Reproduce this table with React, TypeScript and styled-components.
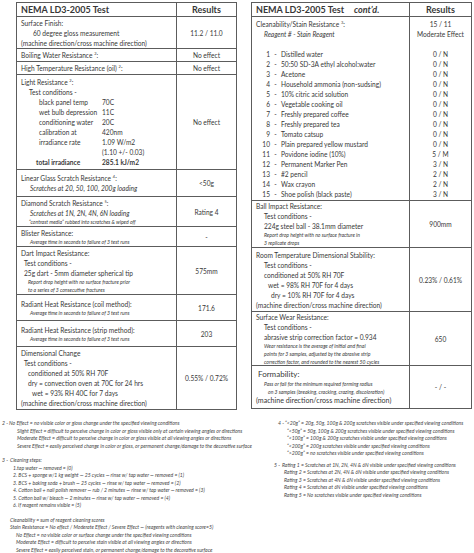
import React from 'react';
import styled, { createGlobalStyle, css } from 'styled-components';

const GlobalStyle = createGlobalStyle`
  html, body {
    margin: 0;
    padding: 0;
    background: #fff;
  }
  body {
    font-family: Lato, "Open Sans", sans-serif;
    color: #383838;
  }
`;

const rule = '#5c5c5c';

const Page = styled.div`
  width: 474px;
  height: 553px;
  overflow: hidden;
  box-sizing: border-box;
  padding-top: 2px;
`;

const Tables = styled.div`
  display: grid;
  grid-template-columns: 221px 221px;
  column-gap: 14px;
  align-items: start;
  padding-left: 16px;
`;

const Sheet = styled.div`
  border: 1px solid ${rule};
`;

const Row = styled.div<{ $h: number; $split: number }>`
  display: grid;
  grid-template-columns: ${(p) => p.$split}px 1fr;
  height: ${(p) => p.$h}px;
  box-sizing: border-box;
  & + & {
    border-top: 1px solid ${rule};
  }
`;

const Desc = styled.div`
  display: flex;
  flex-direction: column;
  justify-content: center;
  padding-left: 4px;
  overflow: hidden;
  white-space: nowrap;
`;

const Result = styled.div`
  border-left: 1px solid ${rule};
  display: flex;
  flex-direction: column;
  justify-content: center;
  align-items: center;
  font-size: 6.6px;
  line-height: 10px;
  white-space: nowrap;
`;

const HeadTitle = styled.div`
  padding-left: 4px;
  font-weight: 700;
  font-size: 9px;
  line-height: 13px;
  white-space: nowrap;
`;

const HeadResult = styled(Result)`
  font-weight: 700;
  font-size: 9px;
  line-height: 13px;
`;

const Contd = styled.span`
  font-style: italic;
  margin-left: 10px;
`;

type Tone = 'body' | 'em' | 'note' | 'big' | 'wide';

const tones = {
  body: css`
    font-size: 6.6px;
    line-height: 10px;
  `,
  em: css`
    font-size: 6.6px;
    line-height: 10px;
    font-style: italic;
  `,
  note: css`
    font-size: 5.1px;
    line-height: 8px;
    font-style: italic;
  `,
  big: css`
    font-size: 8px;
    line-height: 11px;
  `,
  wide: css`
    font-size: 7.1px;
    line-height: 10px;
  `,
};

const Line = styled.div<{ $indent?: number; $tone?: Tone }>`
  padding-left: ${(p) => p.$indent ?? 0}px;
  ${(p) => tones[p.$tone ?? 'body']}
`;

const Pair = styled.div<{ $indent: number; $labelW: number; $bold?: boolean }>`
  display: grid;
  grid-template-columns: ${(p) => p.$labelW}px auto;
  padding-left: ${(p) => p.$indent}px;
  font-size: 6.6px;
  line-height: 10px;
  font-weight: ${(p) => (p.$bold ? 700 : 400)};
`;

const Reagent = styled.div`
  display: grid;
  grid-template-columns: 14px 11px 1fr;
  font-size: 6.6px;
  line-height: 10px;
`;

const Num = styled.span`
  text-align: right;
`;

const Dash = styled.span`
  text-align: center;
`;

const Sup = styled.sup`
  font-size: 4px;
  line-height: 0;
  vertical-align: 3px;
`;

const Notes = styled.div`
  display: grid;
  grid-template-columns: 271px 1fr;
  margin-top: 10px;
  padding-left: 2px;
  font-style: italic;
  font-size: 5.1px;
  line-height: 7.5px;
  color: #444;
  white-space: nowrap;
`;

const NoteBlock = styled.div<{ $gap?: number }>`
  margin-top: ${(p) => p.$gap ?? 0}px;
`;

const NoteLine = styled.div<{ $indent?: number }>`
  padding-left: ${(p) => p.$indent ?? 0}px;
`;

const Lead = styled.span<{ $w: number }>`
  display: inline-block;
  width: ${(p) => p.$w}px;
`;

const reagents = [
  ['1', 'Distilled water', '0 / N'],
  ['2', '50:50 SD-3A ethyl alcohol:water', '0 / N'],
  ['3', 'Acetone', '0 / N'],
  ['4', 'Household ammonia (non-sudsing)', '0 / N'],
  ['5', '10% citric acid solution', '0 / N'],
  ['6', 'Vegetable cooking oil', '0 / N'],
  ['7', 'Freshly prepared coffee', '0 / N'],
  ['8', 'Freshly prepared tea', '0 / N'],
  ['9', 'Tomato catsup', '0 / N'],
  ['10', 'Plain prepared yellow mustard', '0 / N'],
  ['11', 'Povidone iodine (10%)', '5 / M'],
  ['12', 'Permanent Marker Pen', '3 / N'],
  ['13', '#2 pencil', '2 / N'],
  ['14', 'Wax crayon', '2 / N'],
  ['15', 'Shoe polish (black paste)', '3 / N'],
];

const light = [
  ['black panel temp', '70C'],
  ['wet bulb depression', '11C'],
  ['conditioning water', '20C'],
  ['calibration at', '420nm'],
  ['irradiance rate', '1.09 W/m2'],
  ['', '(1.10 +/- 0.03)'],
];

const MD = '(machine direction/cross machine direction)';
const AVG = 'Average time in seconds to failure of 3 test runs';

function LeftSheet() {
  return (
    <Sheet>
      <Row $h={13} $split={159}>
        <HeadTitle>NEMA LD3-2005 Test</HeadTitle>
        <HeadResult>Results</HeadResult>
      </Row>
      <Row $h={32} $split={159}>
        <Desc>
          <Line>Surface Finish:</Line>
          <Line $indent={12}>60 degree gloss measurement</Line>
          <Line>{MD}</Line>
        </Desc>
        <Result>11.2 / 11.0</Result>
      </Row>
      <Row $h={13} $split={159}>
        <Desc>
          <Line>
            Boiling Water Resistance <Sup>2</Sup>:
          </Line>
        </Desc>
        <Result>No effect</Result>
      </Row>
      <Row $h={13} $split={159}>
        <Desc>
          <Line>
            High Temperature Resistance (oil) <Sup>2</Sup>:
          </Line>
        </Desc>
        <Result>No effect</Result>
      </Row>
      <Row $h={95} $split={159}>
        <Desc>
          <Line>
            Light Resistance <Sup>2</Sup>:
          </Line>
          <Line $indent={8}>Test conditions -</Line>
          {light.map(([k, v]) => (
            <Pair key={k + v} $indent={18} $labelW={63}>
              <span>{k}</span>
              <span>{v}</span>
            </Pair>
          ))}
          <Pair $indent={15} $labelW={66} $bold>
            <span>total irradiance</span>
            <span>285.1 kJ/m2</span>
          </Pair>
        </Desc>
        <Result>No effect</Result>
      </Row>
      <Row $h={27} $split={159}>
        <Desc>
          <Line>
            Linear Glass Scratch Resistance <Sup>4</Sup>:
          </Line>
          <Line $indent={9} $tone="em">
            Scratches at 20, 50, 100, 200g loading
          </Line>
        </Desc>
        <Result>&lt;50g</Result>
      </Row>
      <Row $h={30} $split={159}>
        <Desc>
          <Line>
            Diamond Scratch Resistance <Sup>5</Sup>:
          </Line>
          <Line $indent={9} $tone="em">
            Scratches at 1N, 2N, 4N, 6N loading
          </Line>
          <Line $indent={8} $tone="note">
            “contrast media” rubbed into scratches &amp; wiped off
          </Line>
        </Desc>
        <Result>Rating 4</Result>
      </Row>
      <Row $h={20} $split={159}>
        <Desc>
          <Line>Blister Resistance:</Line>
          <Line $indent={9} $tone="note">
            {AVG}
          </Line>
        </Desc>
        <Result>-</Result>
      </Row>
      <Row $h={48} $split={159}>
        <Desc>
          <Line>Dart Impact Resistance:</Line>
          <Line $indent={3}>Test conditions -</Line>
          <Line $indent={3}>25g dart - 5mm diameter spherical tip</Line>
          <Line $indent={7} $tone="note">
            Report drop height with no surface fracture prior
          </Line>
          <Line $indent={7} $tone="note">
            to a series of 3 consecutive fractures
          </Line>
        </Desc>
        <Result>575mm</Result>
      </Row>
      <Row $h={26} $split={159}>
        <Desc>
          <Line>Radiant Heat Resistance (coil method):</Line>
          <Line $indent={9} $tone="note">
            {AVG}
          </Line>
        </Desc>
        <Result>171.6</Result>
      </Row>
      <Row $h={26} $split={159}>
        <Desc>
          <Line>Radiant Heat Resistance (strip method):</Line>
          <Line $indent={9} $tone="note">
            {AVG}
          </Line>
        </Desc>
        <Result>203</Result>
      </Row>
      <Row $h={63} $split={159}>
        <Desc>
          <Line>Dimensional Change</Line>
          <Line $indent={3}>Test conditions -</Line>
          <Line $indent={7}>conditioned at 50% RH 70F</Line>
          <Line $indent={7}>dry = convection oven at 70C for 24 hrs</Line>
          <Line $indent={11}>wet = 93% RH 40C for 7 days</Line>
          <Line>{MD}</Line>
        </Desc>
        <Result>0.55% / 0.72%</Result>
      </Row>
    </Sheet>
  );
}

function RightSheet() {
  return (
    <Sheet>
      <Row $h={13} $split={157}>
        <HeadTitle>
          NEMA LD3-2005 Test<Contd>cont’d.</Contd>
        </HeadTitle>
        <HeadResult>Results</HeadResult>
      </Row>
      <Row $h={184} $split={157}>
        <Desc>
          <Line>
            Cleanability/Stain Resistance <Sup>3</Sup>:
          </Line>
          <Line $indent={8} $tone="em">
            Reagent # - Stain Reagent
          </Line>
          <Line>&nbsp;</Line>
          {reagents.map(([n, name]) => (
            <Reagent key={n}>
              <Num>{n}</Num>
              <Dash>-</Dash>
              <span>{name}</span>
            </Reagent>
          ))}
        </Desc>
        <Result>
          <Line>15 / 11</Line>
          <Line>Moderate Effect</Line>
          <Line>&nbsp;</Line>
          {reagents.map(([n, , score]) => (
            <Line key={n}>{score}</Line>
          ))}
        </Result>
      </Row>
      <Row $h={47} $split={157}>
        <Desc>
          <Line>Ball Impact Resistance:</Line>
          <Line $indent={8}>Test conditions -</Line>
          <Line $indent={8}>224g steel ball - 38.1mm diameter</Line>
          <Line $indent={8} $tone="note">
            Report drop height with no surface fracture in
          </Line>
          <Line $indent={8} $tone="note">
            3 replicate drops
          </Line>
        </Desc>
        <Result>900mm</Result>
      </Row>
      <Row $h={64} $split={157}>
        <Desc>
          <Line>Room Temperature Dimensional Stability:</Line>
          <Line $indent={8}>Test conditions -</Line>
          <Line $indent={8}>conditioned at 50% RH 70F</Line>
          <Line $indent={12}>wet = 98% RH 70F for 4 days</Line>
          <Line $indent={15}>dry = 10% RH 70F for 4 days</Line>
          <Line>{MD}</Line>
        </Desc>
        <Result>0.23% / 0.61%</Result>
      </Row>
      <Row $h={54} $split={157}>
        <Desc>
          <Line>Surface Wear Resistance:</Line>
          <Line $indent={8}>Test conditions -</Line>
          <Line $indent={8}>abrasive strip correction factor = 0.934</Line>
          <Line $indent={8} $tone="note">
            Wear resistance is the average of initial and final
          </Line>
          <Line $indent={8} $tone="note">
            points for 3 samples, adjusted by the abrasive strip
          </Line>
          <Line $indent={8} $tone="note">
            correction factor, and rounded to the nearest 50 cycles
          </Line>
        </Desc>
        <Result>650</Result>
      </Row>
      <Row $h={43} $split={157}>
        <Desc>
          <Line $indent={2} $tone="big">
            Formability:
          </Line>
          <Line $indent={8} $tone="note">
            Pass or fail for the minimum required forming radius
          </Line>
          <Line $indent={12} $tone="note">
            on 3 samples (breaking, cracking, crazing, discoloration)
          </Line>
          <Line $tone="wide">{MD}</Line>
        </Desc>
        <Result>- / -</Result>
      </Row>
    </Sheet>
  );
}

function Footnotes() {
  return (
    <Notes>
      <div>
        <NoteBlock>
          <NoteLine>
            <Lead $w={7}>2 -</Lead>No Effect = no visible color or gloss change under the specified viewing
            conditions
          </NoteLine>
          <NoteLine $indent={15}>
            Slight Effect = difficult to perceive change in color or gloss visible only at certain viewing angles or
            directions
          </NoteLine>
          <NoteLine $indent={15}>
            Moderate Effect = difficult to perceive change in color or gloss visible at all viewing angles or
            directions
          </NoteLine>
          <NoteLine $indent={15}>
            Severe Effect = easily perceived change in color or gloss, or permanent change/damage to the decorative
            surface
          </NoteLine>
        </NoteBlock>
        <NoteBlock $gap={7}>
          <NoteLine>
            <Lead $w={8}>3 -</Lead>Cleaning steps:
          </NoteLine>
          <NoteLine $indent={11}>1.tap water — removed = (0)</NoteLine>
          <NoteLine $indent={11}>
            2. BCS + sponge w/1 kg weight — 25 cycles — rinse w/ tap water — removed = (1)
          </NoteLine>
          <NoteLine $indent={11}>
            3. BCS + baking soda + brush — 25 cycles — rinse w/ tap water — removed = (2)
          </NoteLine>
          <NoteLine $indent={11}>
            4. Cotton ball + nail polish remover — rub / 2 minutes — rinse w/ tap water — removed = (3)
          </NoteLine>
          <NoteLine $indent={11}>
            5. Cotton ball w/ bleach — 2 minutes — rinse w/ tap water — removed = (4)
          </NoteLine>
          <NoteLine $indent={11}>6. If reagent remains visible = (5)</NoteLine>
        </NoteBlock>
        <NoteBlock $gap={7}>
          <NoteLine $indent={8}>Cleanability = sum of reagent cleaning scores</NoteLine>
          <NoteLine $indent={8}>
            Stain Resistance = No effect / Moderate Effect / Severe Effect — (reagents with cleaning score=5)
          </NoteLine>
          <NoteLine $indent={14}>
            No Effect = no visible color or surface change under the specified viewing conditions
          </NoteLine>
          <NoteLine $indent={14}>
            Moderate Effect = difficult to perceive stain visible at all viewing angles or directions
          </NoteLine>
          <NoteLine $indent={14}>
            Severe Effect = easily perceived stain, or permanent change/damage to the decorative surface
          </NoteLine>
        </NoteBlock>
      </div>
      <div>
        <NoteBlock>
          <NoteLine $indent={5}>
            <Lead $w={7}>4 -</Lead>“&lt;20g” = 20g, 50g, 100g &amp; 200g scratches visible under specified viewing
            conditions
          </NoteLine>
          <NoteLine $indent={14}>
            “&lt;50g” = 50g, 100g &amp; 200g scratches visible under specified viewing conditions
          </NoteLine>
          <NoteLine $indent={14}>
            “&lt;100g” = 100g &amp; 200g scratches visible under specified viewing conditions
          </NoteLine>
          <NoteLine $indent={14}>“&lt;200g” = 200g scratches visible under specified viewing conditions</NoteLine>
          <NoteLine $indent={14}>“&gt;200g” = no scratches visible under specified viewing conditions</NoteLine>
        </NoteBlock>
        <NoteBlock $gap={4}>
          <NoteLine $indent={1}>
            <Lead $w={8}>5 -</Lead>Rating 1 = Scratches at 1N, 2N, 4N &amp; 6N visible under specified viewing
            conditions
          </NoteLine>
          <NoteLine $indent={11}>
            Rating 2 = Scratches at 2N, 4N &amp; 6N visible under specified viewing conditions
          </NoteLine>
          <NoteLine $indent={11}>Rating 3 = Scratches at 4N &amp; 6N visible under specified viewing conditions</NoteLine>
          <NoteLine $indent={11}>Rating 4 = Scratches at 6N visible under specified viewing conditions</NoteLine>
          <NoteLine $indent={11}>Rating 5 = No scratches visible under specified viewing conditions</NoteLine>
        </NoteBlock>
      </div>
    </Notes>
  );
}

export default function App() {
  return (
    <Page>
      <GlobalStyle />
      <Tables>
        <LeftSheet />
        <RightSheet />
      </Tables>
      <Footnotes />
    </Page>
  );
}
